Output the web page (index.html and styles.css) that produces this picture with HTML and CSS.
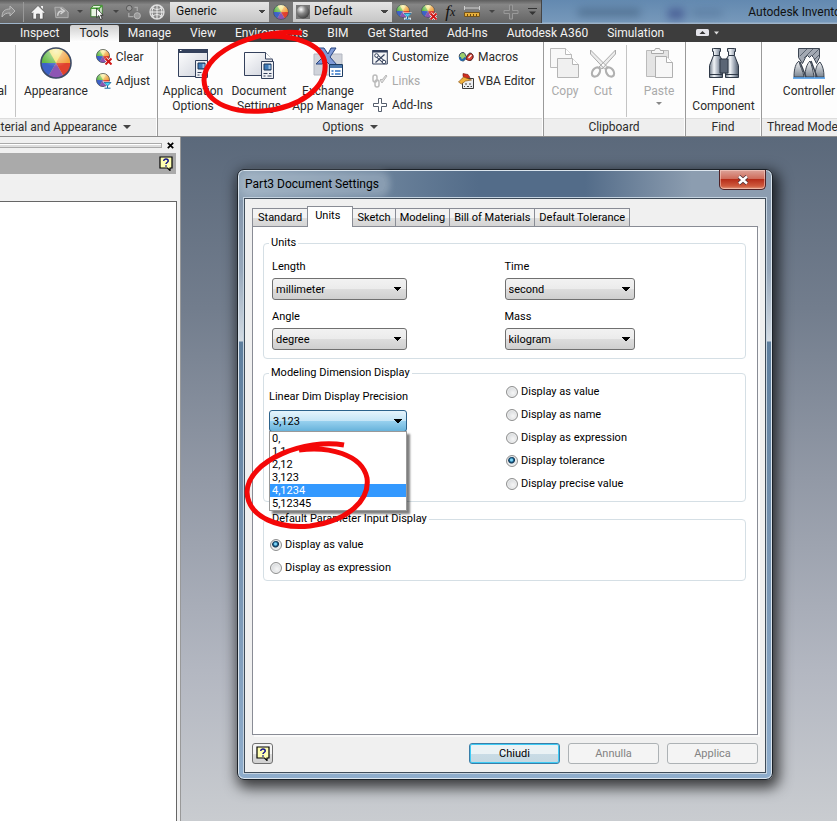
FILE: index.html
```
<!DOCTYPE html>
<html lang="en">
<head>
<meta charset="utf-8">
<title>Autodesk Inventor</title>
<link rel="stylesheet" href="styles.css">
</head>
<body>
<svg class="defs" aria-hidden="true">
  <defs>
    <linearGradient id="page" x1="0" y1="0" x2="1" y2="1"><stop offset="0" stop-color="#fff"/><stop offset="1" stop-color="#ccd0da"/></linearGradient>
    <linearGradient id="steel" x1="0" y1="0" x2="1" y2="0"><stop offset="0" stop-color="#6d7886"/><stop offset=".35" stop-color="#f2f5f8"/><stop offset=".7" stop-color="#98a2b0"/><stop offset="1" stop-color="#4d5867"/></linearGradient>
    <linearGradient id="metal" x1="0" y1="0" x2="0" y2="1"><stop offset="0" stop-color="#f7f8fa"/><stop offset="1" stop-color="#7b8591"/></linearGradient>
    <radialGradient id="ball" cx=".35" cy=".3" r=".75"><stop offset="0" stop-color="#fff"/><stop offset=".45" stop-color="#888"/><stop offset="1" stop-color="#3c3c3c"/></radialGradient>
    <radialGradient id="gloss" cx=".5" cy=".1" r=".9"><stop offset="0" stop-color="#fff" stop-opacity=".65"/><stop offset=".6" stop-color="#fff" stop-opacity="0"/></radialGradient>
    <symbol id="wheel" viewBox="0 0 32 32">
      <circle cx="16" cy="16" r="15" fill="#f6dc4e"/>
      <path d="M16 16L8.500 3A15 15 0 0 1 23.500 3z" fill="#f4e05e"/>
      <path d="M16 16L23.500 3A15 15 0 0 1 31 16z" fill="#f2a23c"/>
      <path d="M16 16H31A15 15 0 0 1 23.500 29z" fill="#e0412e"/>
      <path d="M16 16L23.500 29A15 15 0 0 1 8.500 29z" fill="#8d55b4"/>
      <path d="M16 16L8.500 29A15 15 0 0 1 1 16z" fill="#3d62c8"/>
      <path d="M16 16H1A15 15 0 0 1 8.500 3z" fill="#63b944"/>
      <circle cx="16" cy="16" r="15" fill="url(#gloss)" stroke="#3d4b66" stroke-width="1.600"/>
    </symbol>
    <symbol id="wheel-x" viewBox="0 0 16 16"><use href="#wheel" width="14" height="14"/><path d="M9.500 9.500l6 6M15.500 9.500l-6 6" stroke="#fff" stroke-width="3.200"/><path d="M9.500 9.500l6 6M15.500 9.500l-6 6" stroke="#d01818" stroke-width="2"/></symbol>
    <symbol id="wheel-down" viewBox="0 0 16 16"><use href="#wheel" width="14" height="14"/><path d="M6.500 8.500H16l-3.800 4.300v1H15V16H8v-2.200h2.300v-1z" fill="#fff"/><path d="M8 9.500h7l-3.500 3.500z" fill="#46d6f5" stroke="#13649a" stroke-width=".8"/><path d="M8.500 15.200h6M11.500 13v2" stroke="#13649a"/></symbol>
    <symbol id="help" viewBox="0 0 14 15"><path d="M1 1h12v11h-2v2.500L8.500 12H1z" fill="#ffffb0" stroke="#000" stroke-width="1.200"/><path d="M4.800 4.900c0-2.500 4.400-2.500 4.400.1 0 1.500-2.200 1.500-2.200 3M7 9.300v1.400" fill="none" stroke="#12128c" stroke-width="1.500"/></symbol>
    <symbol id="card" viewBox="0 0 13 18"><path d="M.5.500h12v17H.5z" fill="#eef0f4" stroke="#34415c"/><path d="M3 3h7v6H3z" fill="#3d7ab8" stroke="#1d3457"/><path d="M7.500 4h2v4h-2z" fill="#9cc2e4"/><path d="M2.500 12.500h4M8 12.500h2.500M2.500 15h2M6.500 15h4" stroke="#34415c"/></symbol>
  </defs>
</svg>

<header class="titlebar">
  <div class="quick">
    <div class="qset lead">
      <button class="q" aria-label="Redo"><svg width="16" height="16" viewBox="0 0 16 16"><path d="M2 13c0-6 3-8 8-8V2l5 5-5 5V9C6 9 4 10 2 13z" fill="#8b8b8b" stroke="#b9b9b9"/></svg></button>
      <span class="bar"></span>
      <button class="q" aria-label="Home"><svg width="16" height="16" viewBox="0 0 16 16"><path d="M1 8.500L8 1.500l7 7-1.200 1L13 8.700V15H9.500v-5h-3v5H3V8.700l-.8.800z" fill="#f4f4f4" stroke="#444" stroke-width=".6"/><path d="M11 2h2v3l-2-1.800z" fill="#f4f4f4"/></svg></button>
      <button class="q" aria-label="Return"><svg width="17" height="16" viewBox="0 0 18 16"><path d="M2 3h8l6 5v6H3z" fill="#8a8a8a" stroke="#b4b4b4"/><path d="M5 12c0-4 2-5 5-5M8 4l4 3-4 3" fill="none" stroke="#d4d4d4" stroke-width="1.500"/></svg></button>
      <i class="tri"></i>
      <button class="q" aria-label="Select"><svg width="17" height="18" viewBox="0 0 18 18"><path d="M2 5l3-3h9v9l-3 3H2z" fill="#eaf6e4" stroke="#387a2c"/><path d="M2 5h9v9M11 5l3-3" fill="none" stroke="#46a035" stroke-width="1.700"/><path d="M8 5v10l2.400-2.200L12 17l2-1-1.800-3.700H15z" fill="#fff" stroke="#222" stroke-width=".8"/></svg></button>
      <i class="tri"></i>
      <button class="q" aria-label="Update"><svg width="17" height="16" viewBox="0 0 18 16"><circle cx="4.500" cy="4" r="3" fill="#999" stroke="#555"/><path d="M10 3h3v4M4 9v4h5" fill="none" stroke="#aaa" stroke-width="1.300"/><circle cx="13" cy="12" r="3.300" fill="#999" stroke="#bbb"/></svg></button>
      <button class="q" aria-label="Material"><svg width="16" height="16" viewBox="0 0 16 16"><circle cx="8" cy="8" r="7" fill="#8c8c8c" stroke="#ddd" stroke-width="1.300"/><path d="M8 1v14M1 8h14M3 3.500c3 2.500 7 2.500 10 0M3 12.500c3-2.500 7-2.500 10 0M5 2c-2.500 4-2.500 8 0 12M11 2c2.500 4 2.500 8 0 12" fill="none" stroke="#ececec"/></svg></button>
    </div>
    <select class="qselect" aria-label="Material"><option>Generic</option></select>
    <button class="q wheelbtn" aria-label="Appearance"><svg width="16" height="16"><use href="#wheel"/></svg></button>
    <span class="qwrap"><svg width="14" height="14" viewBox="0 0 14 14"><path d="M0 0h14v14H0z" fill="#777"/><circle cx="7" cy="7" r="6.500" fill="url(#ball)"/></svg><select class="qselect" aria-label="Appearance"><option>Default</option></select></span>
    <div class="qset tail">
      <button class="q" aria-label="Adjust"><svg width="16" height="16"><use href="#wheel-down"/></svg></button>
      <button class="q" aria-label="Clear"><svg width="16" height="16"><use href="#wheel-x"/></svg></button>
      <button class="q fx" aria-label="Parameters">f<sub>x</sub></button>
      <button class="q" aria-label="Measure"><svg width="16" height="14" viewBox="0 0 16 14"><path d="M.5 3h15M.5 1v4M15.500 1v4" stroke="#cfcfcf"/><path d="M.5 7.500h15v4H.5z" fill="#e8b03c" stroke="#77551a"/><path d="M3.500 9v2M6.500 9v2M9.500 9v2M12.500 9v2" stroke="#6b4a12"/></svg></button>
      <i class="tri"></i>
      <button class="q" aria-label="Add"><svg width="16" height="16" viewBox="0 0 16 16"><path d="M6.500 1h3v5.500H15v3H9.500V15h-3V9.500H1v-3h5.500z" fill="#777" stroke="#999"/></svg></button>
      <button class="q" aria-label="More"><svg width="9" height="8" viewBox="0 0 9 8"><path d="M0 .5h9" stroke="#333"/><path d="M1 3.500h7L4.500 7z" fill="#333"/></svg></button>
    </div>
  </div>
  <div class="apptitle"><span class="haze"></span><span>Autodesk Inventor</span></div>
</header>

<nav class="tabs">
  <a href="#">Inspect</a><a href="#" class="on">Tools</a><a href="#">Manage</a><a href="#">View</a><a href="#">Environments</a><a href="#">BIM</a><a href="#">Get Started</a><a href="#">Add-Ins</a><a href="#">Autodesk A360</a><a href="#">Simulation</a>
  <button class="collapse" aria-label="Minimize ribbon"><svg width="24" height="8" viewBox="0 0 24 8"><rect width="13" height="7" rx="1.500" fill="#e4e4ea"/><path d="M3.500 5h6l-3-3z" fill="#333"/><path d="M18 2.500h5L20.500 5.500z" fill="#ddd"/></svg></button>
</nav>

<section class="ribbon">
  <div class="group g-material">
    <div class="tools">
      <button class="big"><svg width="32" height="32" viewBox="0 0 32 32"><circle cx="16" cy="16" r="15" fill="#e8e8e8"/></svg><span>Material</span></button>
      <span class="vline"></span>
      <button class="big"><svg width="32" height="32"><use href="#wheel"/></svg><span>Appearance</span></button>
      <div class="stack">
        <button class="small"><svg width="16" height="16"><use href="#wheel-x"/></svg>Clear</button>
        <button class="small"><svg width="16" height="16"><use href="#wheel-down"/></svg>Adjust</button>
      </div>
    </div>
    <footer>Material and Appearance<i class="tri"></i></footer>
  </div>
  <div class="group g-options">
    <div class="tools">
      <button class="big"><svg width="32" height="32" viewBox="0 0 32 32"><path d="M1.500 2.500h29v27h-29z" fill="url(#page)" stroke="#34415c"/><path d="M1 2h30v4H1z" fill="#34415c"/><path d="M3 3.500h1.500" stroke="#fff"/><use href="#card" x="18" y="13" width="13" height="18"/></svg><span>Application<br>Options</span></button>
      <button class="big"><svg width="32" height="32" viewBox="0 0 32 32"><path d="M1.500 5.500h21l7 7v16h-28z" fill="url(#page)" stroke="#34415c"/><path d="M22.500 5.500v6.500h7" fill="#fff" stroke="#34415c"/><use href="#card" x="18" y="14" width="13" height="18"/></svg><span>Document<br>Settings</span></button>
      <button class="big"><svg width="32" height="32" viewBox="0 0 32 32"><path d="M2 7h28v21H2z" fill="#d0d3da" stroke="#b3b7c0"/><path d="M5 1h7l4 6 3-6h5l-6 9 7 8h-7l-4-4-4 3H4l8-8z" fill="#7f9bd8" stroke="#29457f"/><path d="M17.500 17.500h13v12h-13z" fill="#fff" stroke="#1d3c63"/><path d="M18 18h12v3H18z" fill="#4c78ad"/><path d="M19.500 24h2M19.500 27h2M23 24h5.500M23 27h5.500" stroke="#2f74c8" stroke-width="1.300"/></svg><span>Exchange<br>App Manager</span></button>
      <div class="stack">
        <button class="small"><svg width="16" height="16" viewBox="0 0 16 16"><path d="M.7 1.500h14.600V15H.7z" fill="#f4f5f7" stroke="#34415c"/><path d="M.5 1h15v2.500H.5z" fill="#34415c"/><path d="M4.500 6.500l8 7" stroke="#34415c" stroke-width="3.200"/><path d="M4.500 6.500l8 7" stroke="#fff" stroke-width="1.400"/><circle cx="4.500" cy="6.500" r="1.800" fill="#fff" stroke="#34415c"/><circle cx="12" cy="13" r="1.800" fill="#fff" stroke="#34415c"/><path d="M12.500 5.500l-9 8" stroke="#34415c" stroke-width="1.200"/></svg>Customize</button>
        <button class="small off"><svg width="16" height="16" viewBox="0 0 16 16"><rect x="1" y="2" width="4" height="7" rx="2" fill="none" stroke="#bbb" stroke-width="1.500"/><rect x="3" y="7" width="4" height="7" rx="2" fill="none" stroke="#bbb" stroke-width="1.500"/><path d="M8 7l2 3 5-7-1-1-4 5-1-1z" fill="#ddd" stroke="#bbb"/></svg>Links</button>
        <button class="small"><svg width="16" height="16" viewBox="0 0 16 16"><path d="M6.500 1.500h3v5h5v3h-5v5h-3v-5h-5v-3h5z" fill="#fff" stroke="#555e6d"/></svg>Add-Ins</button>
      </div>
      <div class="stack">
        <button class="small"><svg width="16" height="16" viewBox="0 0 16 16"><path d="M5 3.500c-5 0-5 8 0 8.500 3 0 4-8 7-8 4 0 4 7 0 7.500-2.500 0-3-3-4-4.500S7 3.500 5 3.500z" fill="#9ccf6c" stroke="#34415c"/><path d="M8 10c2-6 6-7 7-3 .5 4-4 6-7 3z" fill="#d84336" stroke="#6c1c17"/><path d="M2 8c0 4 4 3.500 5.500.5" fill="none" stroke="#2367ae" stroke-width="2"/><path d="M10.500 9l3-3" stroke="#fff" stroke-width="1.200"/></svg>Macros</button>
        <button class="small"><svg width="16" height="16" viewBox="0 0 16 16"><path d="M4.500 5.500h11v10h-11z" fill="#eceef1" stroke="#3b3b3b"/><path d="M5 .5l5 1 2 3-4 1-3-2z" fill="#d32f20" stroke="#701810" stroke-width=".6"/><path d="M.5 9l5-5 8 3-6 1-4 3z" fill="#f0b13c" stroke="#8d571a" stroke-width=".7"/><path d="M7 11h2M11 11h2M9 13.500h2M12.500 13.500h1.500M6 13.500h1" stroke="#444"/></svg>VBA Editor</button>
      </div>
    </div>
    <footer>Options<i class="tri"></i></footer>
  </div>
  <div class="group g-clip">
    <div class="tools">
      <button class="big off"><svg width="32" height="32" viewBox="0 0 32 32"><path d="M1.500 1.500h15l6 6v13h-21z" fill="#f8f8f8" stroke="#bbb"/><path d="M16.500 1.500v6h6" fill="#fff" stroke="#bbb"/><path d="M8.500 11.500h15l6 6v13h-21z" fill="#f0f0f0" stroke="#b5b5b5"/><path d="M23.500 11.500v6h6" fill="#fff" stroke="#b5b5b5"/></svg><span>Copy</span></button>
      <button class="big off"><svg width="32" height="32" viewBox="0 0 32 32"><path d="M3.500 3l17 17-3 2L3.500 7zM28.500 3L12 20l3 2L28.500 7z" fill="#ececec" stroke="#aaa"/><ellipse cx="9" cy="25" rx="3.500" ry="5" transform="rotate(35 9 25)" fill="none" stroke="#b0b0b0" stroke-width="2.200"/><ellipse cx="23" cy="25" rx="3.500" ry="5" transform="rotate(-35 23 25)" fill="none" stroke="#b0b0b0" stroke-width="2.200"/></svg><span>Cut</span></button>
      <span class="vline"></span>
      <button class="big off"><svg width="32" height="32" viewBox="0 0 32 32"><path d="M3.500 3.500h22v26h-22z" fill="#e4e4e4" stroke="#bbb"/><path d="M8.500 6.500v-3h3l1-2h4l1 2h3v3z" fill="#f6f6f6" stroke="#aaa"/><path d="M12.500 9.500h11l6 6v15h-17z" fill="#f7f7f7" stroke="#b0b0b0"/><path d="M23.500 9.500v6h6" fill="#fff" stroke="#b0b0b0"/></svg><span>Paste</span><i class="tri"></i></button>
    </div>
    <footer>Clipboard</footer>
  </div>
  <div class="group g-find">
    <div class="tools">
      <button class="big"><svg width="32" height="32" viewBox="0 0 32 32"><path d="M5.500 1.500h7v3h-1v4l3 5v17h-13v-12l4-10v-4h-1v-3z" fill="url(#steel)" stroke="#2f3947"/><path d="M26.500 1.500h-7v3h1v4l-3 5v17h13v-12l-4-10v-4h1v-3z" fill="url(#steel)" stroke="#2f3947"/><path d="M12 12h8v14h-8z" fill="#5a6575" stroke="#2f3947"/><path d="M1.500 27.500h13M17.500 27.500h13M5.500 8.500h6M20.500 8.500h6" stroke="#2f3947"/></svg><span>Find<br>Component</span></button>
    </div>
    <footer>Find</footer>
  </div>
  <div class="group g-thread">
    <div class="tools">
      <button class="big"><svg width="32" height="32" viewBox="0 0 32 32"><path d="M5.500 1.500h21v9l-3 6-3-6-2-2-2 2-2-2-2 2-3 6-4-6z" fill="#a3a9b3" stroke="#3d4653"/><path d="M7 9l7-7M11 11l9-9M19 9l7-7M22 12l4-4" stroke="#5b6470"/><path d="M1 30c0-9 2-14 5-16 1 6 4 9 5 16zM12 30c0-8 2-13 5-16 2 5 3 9 4 16zM22 30c0-8 2-13 5-15 3 4 4 9 4 15z" fill="url(#metal)" stroke="#3d4653"/><path d="M7 15l6 15M18 14l6 16" stroke="#3d4653" stroke-width="1.500"/><path d="M0 31h32" stroke="#3b8fe0" stroke-width="1.500"/></svg><span>Controller</span></button>
    </div>
    <footer>Thread Modeler</footer>
  </div>
  <svg class="mark mark-ribbon" width="130" height="92" viewBox="0 0 130 92" aria-hidden="true"><path d="M101 11C62 6 3 27 3 58C4 84 37 91 62 89C98 86 126 66 124 42C122 20 88 12 60 15" /></svg>
</section>

<main>
  <aside class="dock">
    <div class="grip"><span></span><button aria-label="Close panel"><svg width="7" height="7" viewBox="0 0 7 7"><path d="M.8.8l5.400 5.400M6.200.8L.8 6.200" stroke="#000" stroke-width="1.700"/></svg></button></div>
    <div class="dockhead"><button aria-label="Help"><svg width="14" height="15"><use href="#help"/></svg></button></div>
    <div class="docktree"></div>
  </aside>
  <div class="canvas">
    <div class="dialog" role="dialog" aria-labelledby="dlg">
      <div class="dlghead"><h1 id="dlg">Part3 Document Settings</h1><button class="close" aria-label="Close"><svg width="12" height="10" viewBox="0 0 12 10"><path d="M2 1.500l8 7M10 1.500l-8 7" stroke="#4a3038" stroke-width="4"/><path d="M2 1.500l8 7M10 1.500l-8 7" stroke="#fff" stroke-width="2.400"/></svg></button></div>
      <form class="client">
        <div class="dtabs"><button type="button">Standard</button><button type="button" class="on">Units</button><button type="button">Sketch</button><button type="button">Modeling</button><button type="button">Bill of Materials</button><button type="button">Default Tolerance</button></div>
        <div class="panel">
          <fieldset class="units">
            <legend>Units</legend>
            <div class="cols">
              <div class="field"><label for="len">Length</label><select id="len"><option>millimeter</option></select></div>
              <div class="field short"><label for="time">Time</label><select id="time"><option>second</option></select></div>
              <div class="field"><label for="ang">Angle</label><select id="ang"><option>degree</option></select></div>
              <div class="field short"><label for="mass">Mass</label><select id="mass"><option>kilogram</option></select></div>
            </div>
          </fieldset>
          <fieldset class="dims">
            <legend>Modeling Dimension Display</legend>
            <div class="cols">
              <div class="field precision"><label for="prec">Linear Dim Display Precision</label>
                <select id="prec" class="hot"><option>3,123</option></select>
                <ul class="popup" role="listbox" aria-label="Precision"><li role="option">0,</li><li role="option">1,1</li><li role="option">2,12</li><li role="option">3,123</li><li role="option" aria-selected="true" class="sel">4,1234</li><li role="option">5,12345</li></ul>
                <svg class="mark mark-list" width="130" height="92" viewBox="0 0 130 92" aria-hidden="true"><path d="M100 7C62 0 4 22 3 54C4 80 36 91 66 88C104 83 126 62 123 40C118 16 84 8 55 12"/></svg>
              </div>
              <div class="radios">
                <label><input type="radio" name="dim">Display as value</label>
                <label><input type="radio" name="dim">Display as name</label>
                <label><input type="radio" name="dim">Display as expression</label>
                <label><input type="radio" name="dim" checked>Display tolerance</label>
                <label><input type="radio" name="dim">Display precise value</label>
              </div>
            </div>
          </fieldset>
          <fieldset class="params">
            <legend>Default Parameter Input Display</legend>
            <div class="radios">
              <label><input type="radio" name="par" checked>Display as value</label>
              <label><input type="radio" name="par">Display as expression</label>
            </div>
          </fieldset>
        </div>
        <div class="actions"><button type="button" class="helpbtn" aria-label="Help"><svg width="14" height="15"><use href="#help"/></svg></button><button type="button" class="default">Chiudi</button><button type="button" disabled>Annulla</button><button type="button" disabled>Applica</button></div>
      </form>
    </div>
  </div>
</main>
</body>
</html>
```
FILE: styles.css
```
* { box-sizing: border-box; }
body {
  margin: 0;
  min-height: 100vh;
  display: flex;
  flex-direction: column;
  overflow: hidden;
  font: 12px/15px Roboto, "Noto Sans", sans-serif;
  color: #2b2b2b;
}
button, select, input { font: inherit; color: inherit; margin: 0; }
button { background: none; border: 0; padding: 0; }
svg { display: block; flex: none; }
.defs { position: absolute; width: 0; height: 0; }
.tri { flex: none; border: 4px solid transparent; border-top-color: #444; border-bottom: 0; }

/* title bar */
.titlebar { display: flex; height: 24px; background: linear-gradient(#6389b0, #7698ba 90%, #a9bccf); }
.quick {
  flex: none; width: 542px; height: 23px; overflow: hidden;
  display: flex; align-items: center;
  background: linear-gradient(#5d5d5d, #868686 20%, #646464);
  border-right: 1px solid #444;
}
.q { display: flex; align-items: center; }
.qset { display: flex; align-items: center; justify-content: space-between; }
.lead { width: 170px; padding-right: 5px; }
.tail { flex: 1; padding: 0 4px; }
.quick .tri { border-width: 3px; border-bottom: 0; }
.bar { width: 1px; height: 20px; background: #999; }
.qselect {
  appearance: none; width: 99px; height: 20px; padding: 0 6px; border: 0; border-radius: 0; color: #111;
  background: linear-gradient(45deg, transparent 50%, #444 50%) right 7px center / 4px 4px no-repeat,
    linear-gradient(-45deg, transparent 50%, #444 50%) right 3px center / 4px 4px no-repeat,
    linear-gradient(#e4e4e4, #c6c6c6);
}
.wheelbtn { background: #777; padding: 2px 4px; }
.qwrap { display: flex; align-items: center; padding-left: 3px; background: linear-gradient(#e4e4e4, #c6c6c6); }
.qwrap .qselect { width: 82px; padding-left: 4px; }
.fx { font: italic 17px/20px "Liberation Serif", serif; color: #111; }
.fx sub { font-size: 12px; line-height: 10px; }
.apptitle { flex: 1; min-width: 0; display: flex; align-items: center; justify-content: space-between; overflow: hidden; white-space: nowrap; color: #111; }
.apptitle span:last-child { margin-right: -8px; }
.haze {
  flex: none; width: 180px; height: 24px; filter: blur(4px);
  background: linear-gradient(#3b5876, #3b5876) 36px 9px / 62px 7px no-repeat,
    linear-gradient(#303c80, #303c80) 126px 9px / 16px 10px no-repeat,
    linear-gradient(#4f6f93, #4f6f93) 150px 10px / 30px 6px no-repeat;
  opacity: .6;
}

/* ribbon tabs */
.tabs { display: flex; align-items: stretch; height: 18px; padding-left: 11px; background: #3d3d3d; white-space: nowrap; }
.tabs a { padding: 0 10px 0 9px; color: #f2f2f2; text-decoration: none; line-height: 18px; }
.tabs .on { color: #222; background: linear-gradient(#cfcfcf, #fff); border-radius: 2px 2px 0 0; margin: 1px 0 0 1px; line-height: 17px; }
.collapse { margin-left: 22px; }

/* ribbon */
.ribbon { position: relative; display: flex; height: 95px; background: #fdfdfd; border-bottom: 1px solid #8c8c8c; }
.group { flex: none; display: flex; flex-direction: column; overflow: hidden; border-right: 1px solid #9a9a9a; }
.tools { flex: 1; display: flex; padding-top: 5px; }
.group footer {
  height: 18px; margin-right: 1px; padding-bottom: 1px; background: #eee; border-top: 1px solid #ddd; white-space: nowrap;
  display: flex; align-items: center; justify-content: center; gap: 6px;
}
.big { display: flex; flex-direction: column; align-items: center; gap: 5px; flex: none; text-align: center; white-space: nowrap; }
.small { display: flex; align-items: center; gap: 4px; height: 20px; white-space: nowrap; }
.stack { display: flex; flex-direction: column; gap: 4px; flex: none; }
.off { color: #aaa; }
.off .tri { border-width: 3px; border-bottom: 0; margin-top: -2px; border-top-color: #888; }
.vline { width: 1px; flex: none; margin: -2px 0 1px; background: #c4c4c4; }
.g-material { width: 158px; }
.g-material .tools { justify-content: flex-end; gap: 8px; padding-right: 7px; }
.g-material footer { justify-content: flex-end; padding-right: 25px; }
.g-options { width: 386px; }
.g-options .tools { display: grid; grid-template-columns: 66px 66px 72px 86px 1fr; padding-left: 2px; }
.g-options .stack { padding-left: 8px; }
.g-clip { width: 142px; }
.g-clip .tools { display: grid; grid-template-columns: 42px 34px 13px 1fr; }
.g-clip .vline { justify-self: center; }
.g-find { width: 76px; }
.g-find .tools, .g-thread .tools { justify-content: center; }
.g-thread { width: 94px; border: 0; }
.g-thread footer { justify-content: flex-start; padding-left: 5px; }

/* hand-drawn marks */
.mark { position: absolute; pointer-events: none; fill: none; stroke: #f40808; stroke-width: 5; stroke-linecap: butt; }
.mark-ribbon { left: 201px; top: -20px; z-index: 3; }
.mark-list { left: -25px; top: 54px; z-index: 3; }

/* workspace */
main { flex: 1; display: flex; }
.dock { flex: none; width: 181px; display: flex; flex-direction: column; background: #f0f0f0; border-right: 1px solid #999; }
.grip { display: flex; align-items: center; height: 16px; gap: 5px; padding-right: 6px; }
.grip span { flex: 1; height: 5px; border: 1px solid #aaa; border-left: 0; background: linear-gradient(#fff 50%, #ddd 50%); }
.dockhead { height: 21px; margin-right: 4px; background: #aaa; display: flex; align-items: center; justify-content: flex-end; padding-right: 3px; }
.docktree { flex: 1; margin: 27px 3px 0 0; background: #fff; border: 1px solid #666; border-width: 1px 1px 0 0; }
.canvas { flex: 1; min-width: 0; padding: 32px 64px 41px 56px; background: linear-gradient(#5b697b, #727d8d 25%, #9299a6 50%, #b3b7c1 78%, #c9ccd0); }

/* dialog */
.dialog {
  font: 11px/14px Roboto, "Noto Sans", sans-serif; color: #000;
  height: 100%; display: flex; flex-direction: column; padding: 0 6px 6px;
  border: 1px solid #1b2128; border-radius: 7px;
  background: linear-gradient(90deg, #8ea2b5, #536c89 45%, #536c89 65%, #8c9db0 85%) 0 0 / 100% 30px no-repeat,
    linear-gradient(#8496ab 30px, #97a8bb 100px, #d3dbe3 171px, #5f7f9e 172px, #7793b0 380px, #8fadcc);
  box-shadow: inset 0 0 0 1px #dbe5ee, 3px 5px 14px 3px rgba(0, 0, 0, .7);
}
.dlghead { display: flex; justify-content: space-between; height: 28px; }
h1 { margin: 6px 0 0 1px; padding-right: 6px; height: 16px; font: 12px/16px Roboto, "Noto Sans", sans-serif; background: rgba(210, 222, 233, .3); box-shadow: 0 0 6px 5px rgba(210, 222, 233, .3); border-radius: 6px; }
.close {
  width: 47px; height: 20px; display: flex; align-items: center; justify-content: center;
  border: 1px solid #4f2226; border-top: 0; border-radius: 0 0 5px 5px;
  background: linear-gradient(#dda49a, #cf6d5c 45%, #b72e1a 50%, #cf5a3e 85%, #e29b80); box-shadow: inset 0 0 0 1px rgba(255, 220, 210, .5);
}
.client {
  flex: 1; display: flex; flex-direction: column; padding: 8px 7px;
  background: #f0f0f0; border: 1px solid #3f4c59; outline: 1px solid #c5d3e0;
}
.dtabs { display: flex; align-items: flex-end; height: 20px; margin-bottom: -1px; z-index: 1; }
.dtabs button { height: 19px; padding: 1px 4px 0; border: 1px solid #898c95; margin-left: -1px; background: linear-gradient(#f3f3f3 50%, #dedede 55%, #d5d5d5); line-height: 16px; white-space: nowrap; }
.dtabs button:first-child { margin-left: 0; padding: 1px 5px 0; }
.dtabs .on { height: 21px; background: #fff; padding: 0 12px 3px 7px; border-bottom: 0; line-height: 15px; }
.panel { flex: 1; padding: 9px 11px 9px 10px; border: 1px solid #898c95; background: #fff; display: flex; flex-direction: column; gap: 7px; box-shadow: 2px 2px 0 #fafafa; }
fieldset { margin: 0; min-width: 0; padding: 0; border: 1px solid #d5dfe5; border-radius: 4px; }
legend { padding: 0 2px; line-height: 14px; }
.units { padding: 10px 8px 8px; }
.units legend { margin-left: -3px; }
.cols { display: grid; grid-template-columns: 1fr 1fr; row-gap: 10px; }
.field { display: flex; flex-direction: column; gap: 4px; width: 135px; }
.short { width: 130px; }
.client select {
  appearance: none; width: 100%; height: 22px; padding: 1px 3px 0; border: 1px solid #707070; border-radius: 3px; line-height: 18px;
  background: linear-gradient(45deg, transparent 50%, #000 50%) right 8px center / 4px 4px no-repeat,
    linear-gradient(-45deg, transparent 50%, #000 50%) right 4px center / 4px 4px no-repeat,
    linear-gradient(#f2f2f2, #ebebeb 50%, #dddddd 50%, #cfcfcf);
}
.dims { padding: 4px 8px 9px 5px; }
.dims legend, .params legend { margin-left: 0; }
.precision { position: relative; padding-top: 6px; gap: 6px; width: 138px; }
.precision label { white-space: nowrap; }
.client .hot {
  border-color: #2c628b;
  background: linear-gradient(45deg, transparent 50%, #000 50%) right 8px center / 4px 4px no-repeat,
    linear-gradient(-45deg, transparent 50%, #000 50%) right 4px center / 4px 4px no-repeat,
    linear-gradient(#e5f4fc, #c4e5f6 50%, #98d1ef 50%, #68b3db);
}
.popup { position: absolute; z-index: 2; top: 47px; left: 0; right: 0; margin: 0; padding: 0; list-style: none; background: #fff; border: 1px solid #999; box-shadow: 3px 3px 2px rgba(0, 0, 0, .5); }
.popup li { padding-left: 2px; line-height: 13px; }
.popup .sel { background: #3399ff; color: #fff; }
.radios { display: flex; flex-direction: column; gap: 7px; }
.radios label { display: flex; align-items: center; gap: 3px; height: 16px; }
.client input {
  appearance: none; width: 12px; height: 12px; border: 1px solid #8e8f8f; border-radius: 50%;
  background: radial-gradient(circle at 60% 60%, #f6f6f6, #c9cdd1); box-shadow: inset 0 0 0 1px #eee;
}
.client input:checked { background: radial-gradient(circle at 45% 40%, #7fd4f5 0 1px, #1b6794 2px, #0d2f4c 3px, #e6e9eb 4px); }
.params { margin-top: 3px; padding: 11px 6px 4px; }
.dims .radios { padding-left: 3px; }
.actions { display: flex; gap: 8px; padding-top: 8px; }
.actions button { width: 91px; height: 21px; border: 1px solid #707070; border-radius: 3px; background: linear-gradient(#f4f4f4 50%, #dedede 50%, #d0d0d0); }
.actions .helpbtn { width: 21px; display: flex; align-items: center; justify-content: center; margin-right: auto; }
.actions .default { border-color: #3a7ea8; box-shadow: inset 0 0 0 1px #3ecbf5; background: linear-gradient(#eaf2f5 50%, #c9dce6 50%, #c5d8e1); }
.actions button:disabled { color: #838383; border-color: #adb2b5; background: #f4f4f4; }
```
